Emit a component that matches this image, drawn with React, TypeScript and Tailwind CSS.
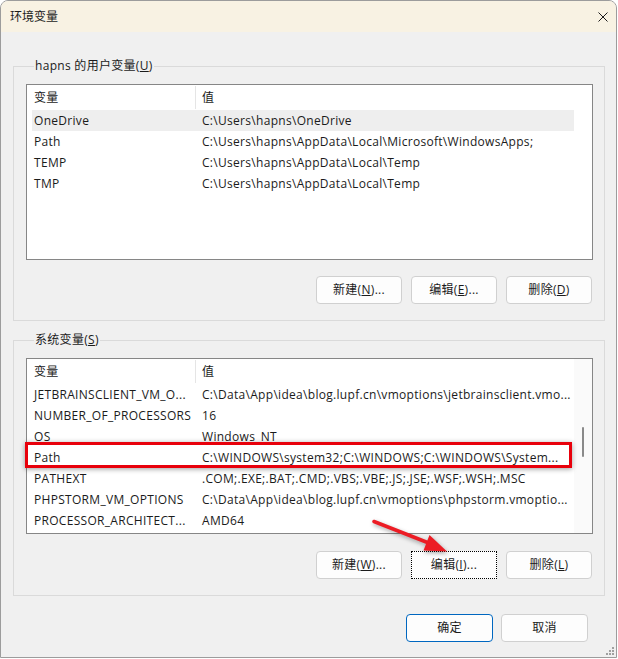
import React from "react";

const font = "font-['Open_Sans','Noto_Sans_CJK_SC',sans-serif]";

type Row = [string, string];

const userRows: Row[] = [
    ["OneDrive", "C:\\Users\\hapns\\OneDrive"],
    ["Path", "C:\\Users\\hapns\\AppData\\Local\\Microsoft\\WindowsApps;"],
    ["TEMP", "C:\\Users\\hapns\\AppData\\Local\\Temp"],
    ["TMP", "C:\\Users\\hapns\\AppData\\Local\\Temp"],
];

const sysRows: Row[] = [
    ["JETBRAINSCLIENT_VM_O...", "C:\\Data\\App\\idea\\blog.lupf.cn\\vmoptions\\jetbrainsclient.vmo..."],
    ["NUMBER_OF_PROCESSORS", "16"],
    ["OS", "Windows_NT"],
    ["Path", "C:\\WINDOWS\\system32;C:\\WINDOWS;C:\\WINDOWS\\System..."],
    ["PATHEXT", ".COM;.EXE;.BAT;.CMD;.VBS;.VBE;.JS;.JSE;.WSF;.WSH;.MSC"],
    ["PHPSTORM_VM_OPTIONS", "C:\\Data\\App\\idea\\blog.lupf.cn\\vmoptions\\phpstorm.vmoptio..."],
    ["PROCESSOR_ARCHITECT...", "AMD64"],
];

export default function App() {
    return (
        <div className={`${font} text-[12px] tracking-[0.3px] text-[#1b1b1b] bg-white w-[618px] h-[659px]`}>
            <div className="relative w-[617px] h-[658px] border border-[#9c9c9c] rounded-t-[8px] overflow-hidden bg-[#f0f0f0] flex flex-col">
                {/* title bar */}
                <div className="h-[31px] shrink-0 bg-[#f8f2e3] flex items-center justify-between pl-[9px] pr-[8px]">
                    <span className="leading-[16px] tracking-normal">环境变量</span>
                    <svg width="10" height="10" viewBox="0 0 10 10">
                        <path d="M0.5 0.5 L9.5 9.5 M9.5 0.5 L0.5 9.5" stroke="#1b1b1b" strokeWidth="1" />
                    </svg>
                </div>

                <div className="pl-[12px] flex flex-col">
                    <GroupBox label={<>hapns 的用户变量(<u>U</u>)</>} className="mt-[26px]" btnGap="mt-[16px]">
                        <ListView rows={userRows} highlight={0} />
                        <Buttons labels={[
                            <>新建(<u>N</u>)...</>,
                            <>编辑(<u>E</u>)...</>,
                            <>删除(<u>D</u>)</>,
                        ]} />
                    </GroupBox>

                    <GroupBox label={<>系统变量(<u>S</u>)</>} className="mt-[11px]" btnGap="mt-[17px]">
                        <ListView rows={sysRows} scrollbar>
                            <div className="absolute left-[-2px] top-[83px] w-[547px] h-[26px] border-[3px] border-[#e8000b] shadow-[0_1px_5px_rgba(0,0,0,0.4)]" />
                        </ListView>
                        <Buttons focused={1} labels={[
                            <>新建(<u>W</u>)...</>,
                            <>编辑(<u>I</u>)...</>,
                            <>删除(<u>L</u>)</>,
                        ]} />
                    </GroupBox>
                </div>

                <div className="flex justify-end gap-[8px] pr-[28px] mt-[18px]">
                    <button className="w-[87px] h-[28px] rounded-[4px] bg-[#fdfdfd] border border-[#0067c0] shadow-[inset_0_0_0_1px_#fdfdfd]">确定</button>
                    <button className="w-[87px] h-[28px] rounded-[4px] bg-[#fdfdfd] border border-[#d0d0d0]">取消</button>
                </div>

                {/* resize grip */}
                <svg className="absolute right-[1px] bottom-[1px]" width="10" height="10" viewBox="0 0 10 10">
                    <rect x="7" y="1" width="2" height="2" fill="#a0a0a0" />
                    <rect x="4" y="4" width="2" height="2" fill="#a0a0a0" />
                    <rect x="7" y="4" width="2" height="2" fill="#a0a0a0" />
                    <rect x="1" y="7" width="2" height="2" fill="#a0a0a0" />
                    <rect x="4" y="7" width="2" height="2" fill="#a0a0a0" />
                    <rect x="7" y="7" width="2" height="2" fill="#a0a0a0" />
                </svg>

                {/* red annotation arrow */}
                <svg className="absolute left-[-1px] top-[-1px] pointer-events-none drop-shadow-[1px_2px_2px_rgba(0,0,0,0.35)]" width="618" height="659" viewBox="0 0 618 659">
                    <line x1="374" y1="521.5" x2="430" y2="543.5" stroke="#ec1c24" strokeWidth="3.5" strokeLinecap="round" />
                    <polygon points="447,551.5 423.5,550.5 429.5,535" fill="#ec1c24" />
                </svg>
            </div>
        </div>
    );
}

function GroupBox({ label, children, className, btnGap }: { label: React.ReactNode; children: React.ReactNode[]; className: string; btnGap: string }) {
    return (
        <fieldset className={`w-[592px] border border-[#dadada] pl-[12px] pr-[11px] pb-[16px] ${className}`}>
            <legend className="ml-[8px] px-[1px] leading-[16px]">{label}</legend>
            <div className="pt-[10px]">{children[0]}</div>
            <div className={btnGap}>{children[1]}</div>
        </fieldset>
    );
}

function ListView({ rows, highlight, scrollbar, children }: { rows: Row[]; highlight?: number; scrollbar?: boolean; children?: React.ReactNode }) {
    return (
        <div className="relative w-[567px] h-[176px] border border-[#868686] bg-white flex">
            <div className="w-[547px] flex flex-col">
                <div className="h-[25px] flex items-center shrink-0">
                    <div className="w-[169px] h-[23px] pl-[7px] flex items-center border-r border-[#e5e5e5]">变量</div>
                    <div className="pl-[6px]">值</div>
                </div>
                <div className="ml-[5px] flex flex-col">
                    {rows.map(([name, value], i) => (
                        <div key={i} className={`h-[21px] flex items-center whitespace-nowrap ${i === highlight ? "bg-[#eeeeee]" : ""}`}>
                            <div className="w-[164px] pl-[2px] overflow-hidden">{name}</div>
                            <div className="flex-1 pl-[6px] overflow-hidden">{value}</div>
                        </div>
                    ))}
                </div>
            </div>
            <div className={`flex-1 flex justify-center ${scrollbar ? "bg-[#fafafa]" : ""}`}>
                {scrollbar && <div className="w-[2px] h-[30px] mt-[68px] rounded-full bg-[#8a8a8a]" />}
            </div>
            {children}
        </div>
    );
}

function Buttons({ labels, focused }: { labels: React.ReactNode[]; focused?: number }) {
    return (
        <div className="flex justify-end gap-[9px] pr-[1px]">
            {labels.map((l, i) => (
                <button
                    key={i}
                    className={`w-[86px] h-[28px] rounded-[4px] bg-[#fdfdfd] border ${i === focused ? "border-dotted border-black rounded-none" : "border-[#d0d0d0]"}`}
                >
                    {l}
                </button>
            ))}
        </div>
    );
}
